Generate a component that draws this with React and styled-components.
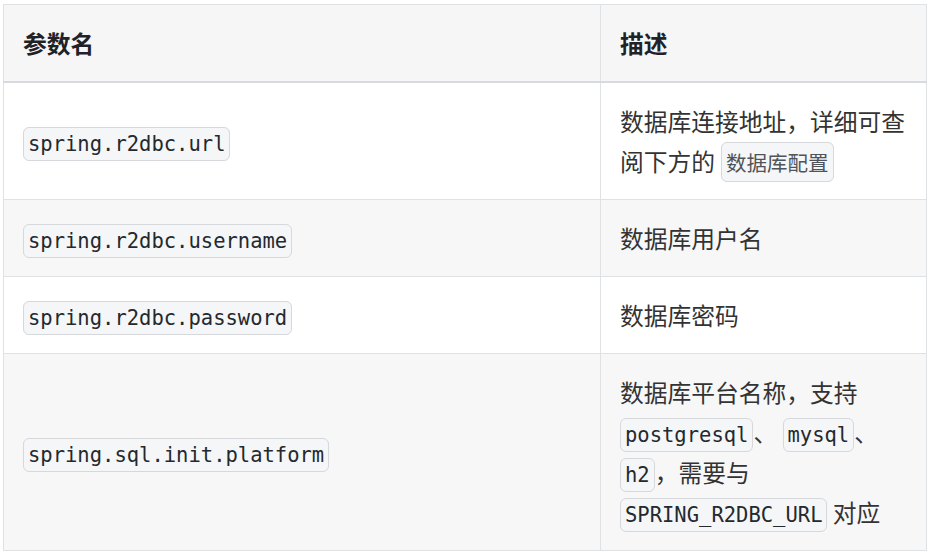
import React from "react";
import styled, { createGlobalStyle } from "styled-components";

const GlobalStyle = createGlobalStyle`
  body {
    margin: 0;
    padding: 4px 2px 0 3px;
    background: #ffffff;
    font-family: "Noto Sans CJK SC", "Noto Sans", sans-serif;
    color: #333333;
  }
`;

const Table = styled.table`
  width: 923px;
  table-layout: fixed;
  border-collapse: collapse;
  font-size: 23.75px;
  line-height: 40px;
`;

const HeadCell = styled.th`
  text-align: left;
  font-weight: 700;
  color: #1f2328;
  background: #f6f6f6;
  padding: 18px 19px;
  border: 1px solid #dfe2e5;
  border-bottom: 2px solid #d7dbe0;
  vertical-align: middle;
`;

const Row = styled.tr`
  background: ${(p) => (p.$striped ? "#f7f7f7" : "#ffffff")};
`;

const Cell = styled.td`
  padding: 18px ${(p) => (p.$desc ? "16px" : "19px")} 18px 19px;
  border: 1px solid #dfe2e5;
  vertical-align: middle;
`;

const Code = styled.code`
  font-family: "DejaVu Sans Mono", "Liberation Mono", "Noto Sans CJK SC", monospace;
  font-size: 20.5px;
  line-height: 1;
  color: #24292e;
  background: #f5f6f8;
  border: 1px solid #d6d8dc;
  border-radius: 6px;
  padding: 4px 4px;
`;

const CjkCode = styled(Code)`
  font-family: "Noto Sans CJK SC", sans-serif;
  color: #4f545a;
  margin-left: 6px;
`;

const rows = [
  {
    name: "spring.r2dbc.url",
    desc: (
      <>
        数据库连接地址，详细可查阅下方的<CjkCode>数据库配置</CjkCode>
      </>
    ),
  },
  { name: "spring.r2dbc.username", desc: "数据库用户名" },
  { name: "spring.r2dbc.password", desc: "数据库密码" },
  {
    name: "spring.sql.init.platform",
    desc: (
      <>
        数据库平台名称，支持 <Code>postgresql</Code>、 <Code>mysql</Code>、{" "}
        <Code>h2</Code>，需要与 <Code>SPRING_R2DBC_URL</Code> 对应
      </>
    ),
  },
];

export default function App() {
  return (
    <>
      <GlobalStyle />
      <Table>
        <colgroup>
          <col style={{ width: 597 }} />
          <col style={{ width: 326 }} />
        </colgroup>
        <thead>
          <tr>
            <HeadCell>参数名</HeadCell>
            <HeadCell>描述</HeadCell>
          </tr>
        </thead>
        <tbody>
          {rows.map((r, i) => (
            <Row key={r.name} $striped={i % 2 === 1}>
              <Cell>
                <Code>{r.name}</Code>
              </Cell>
              <Cell $desc>{r.desc}</Cell>
            </Row>
          ))}
        </tbody>
      </Table>
    </>
  );
}
